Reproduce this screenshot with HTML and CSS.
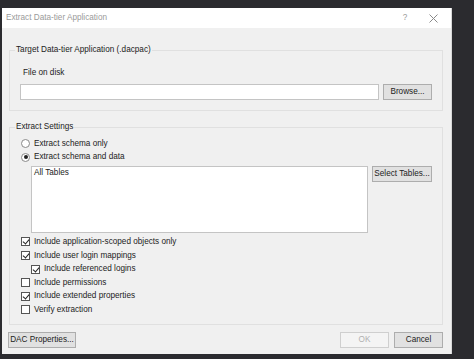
FILE: index.html
```html
<!DOCTYPE html>
<html>
    <head>
        <meta charset="UTF-8">
        <meta name="viewport" content="width=device-width, initial-scale=1.0">
        <title>Extract Data-tier Application</title>
        <link rel="stylesheet" href="styles.css">
    </head>

    <body>
        <div class="dialog">
            <div class="titlebar">
                <span class="title">Extract Data-tier Application</span>
                <span class="help">?</span>
                <span class="close">
                    <svg width="9" height="9" viewBox="0 0 9 9"><path d="M0.5 0.5 L8.5 8.5 M8.5 0.5 L0.5 8.5" stroke="#8a8a8a" stroke-width="1" fill="none"/></svg>
                </span>
            </div>

            <div class="content">
                <fieldset class="group">
                    <legend>Target Data-tier Application (.dacpac)</legend>
                    <div class="target">
                        <div class="field-label">File on disk</div>
                        <div class="file-row">
                            <div class="textbox"></div>
                            <button class="btn browse">Browse...</button>
                        </div>
                    </div>
                </fieldset>

                <fieldset class="group settings-group">
                    <legend>Extract Settings</legend>
                    <div class="settings">
                        <div class="option">
                            <span class="radio"></span>
                            <span>Extract schema only</span>
                        </div>
                        <div class="option">
                            <span class="radio checked"></span>
                            <span>Extract schema and data</span>
                        </div>
                        <div class="tables-row">
                            <div class="listbox">All Tables</div>
                            <button class="btn select-tables">Select Tables...</button>
                        </div>
                        <div class="option">
                            <span class="check checked"></span>
                            <span>Include application-scoped objects only</span>
                        </div>
                        <div class="option">
                            <span class="check checked"></span>
                            <span>Include user login mappings</span>
                        </div>
                        <div class="option nested">
                            <span class="check checked"></span>
                            <span>Include referenced logins</span>
                        </div>
                        <div class="option">
                            <span class="check"></span>
                            <span>Include permissions</span>
                        </div>
                        <div class="option">
                            <span class="check checked"></span>
                            <span>Include extended properties</span>
                        </div>
                        <div class="option">
                            <span class="check"></span>
                            <span>Verify extraction</span>
                        </div>
                    </div>
                </fieldset>

                <div class="footer">
                    <button class="btn dac">DAC Properties...</button>
                    <div class="footer-right">
                        <button class="btn ok" disabled>OK</button>
                        <button class="btn cancel">Cancel</button>
                    </div>
                </div>
            </div>
        </div>
    </body>
</html>
```

FILE: styles.css
```css
* {
    box-sizing: border-box;
}
body {
    margin: 0;
    background-color: #2b2b2f;
    font-family: "Liberation Sans", Arial, sans-serif;
    font-size: 8.2px;
    line-height: 12px;
    color: #222;
}
.dialog {
    width: 450px;
    height: 346px;
    margin: 8px 0 0 2px;
    background-color: #f0f0f0;
    border-right: 1px solid #d8d8d8;
    display: flex;
    flex-direction: column;
}
.titlebar {
    height: 20px;
    background-color: #fff;
    display: flex;
    align-items: center;
    padding-left: 4px;
}
.title {
    color: #9a9a9a;
    flex: 1;
}
.help {
    color: #9a9a9a;
    width: 10px;
    margin-right: 19px;
    text-align: center;
}
.close {
    width: 9px;
    height: 9px;
    margin-right: 13px;
    display: flex;
}
.content {
    flex: 1;
    padding: 16px 8px 0 7px;
    display: flex;
    flex-direction: column;
}
.group {
    margin: 0;
    padding: 0;
    border: 1px solid #e0e0e0;
    min-width: 0;
}
.group legend {
    margin-left: 5px;
    padding: 0 1px;
}
.target {
    padding: 0 10px 10px 10px;
}
.field-label {
    margin: 11px 0 5px 3px;
}
.file-row {
    display: flex;
    gap: 4px;
}
.textbox {
    flex: 1;
    height: 16px;
    background-color: #fff;
    border: 1px solid #c4c4c4;
}
.btn {
    font-family: inherit;
    font-size: inherit;
    line-height: 12px;
    color: #222;
    background-color: #e1e1e1;
    border: 1px solid #adadad;
    border-radius: 0;
    padding: 0;
    height: 16px;
    white-space: nowrap;
}
.browse {
    width: 49px;
}
.settings-group {
    margin-top: 10px;
}
.settings {
    padding: 4px 10px 7px 11px;
}
.option {
    display: flex;
    align-items: center;
    height: 13.6px;
    gap: 4px;
}
.radio {
    width: 9px;
    height: 9px;
    border: 1px solid #8a8a8a;
    border-radius: 50%;
    background-color: #fff;
    display: flex;
    align-items: center;
    justify-content: center;
}
.radio.checked::after {
    content: "";
    width: 4px;
    height: 4px;
    border-radius: 50%;
    background-color: #222;
}
.tables-row {
    display: flex;
    align-items: flex-start;
    gap: 4px;
    margin: 2px 0 2px 10px;
}
.listbox {
    flex: 1;
    height: 67px;
    background-color: #fff;
    border: 1px solid #c4c4c4;
    padding: 0 2px;
}
.select-tables {
    width: 60px;
}
.check {
    width: 9px;
    height: 9px;
    border: 1px solid #555;
    background-color: #fff;
    position: relative;
}
.check.checked::after {
    content: "";
    position: absolute;
    left: 2px;
    top: 0;
    width: 3px;
    height: 5px;
    border-right: 1.3px solid #222;
    border-bottom: 1.3px solid #222;
    transform: rotate(40deg);
}
.nested {
    padding-left: 10px;
}
.footer {
    display: flex;
    justify-content: space-between;
    margin: 7px 0 0 -1px;
}
.footer-right {
    display: flex;
    gap: 5px;
}
.dac {
    width: 68px;
}
.ok, .cancel {
    width: 49px;
}
.ok {
    background-color: #f4f4f4;
    border-color: #cfcfcf;
    color: #b0b0b0;
}
```
